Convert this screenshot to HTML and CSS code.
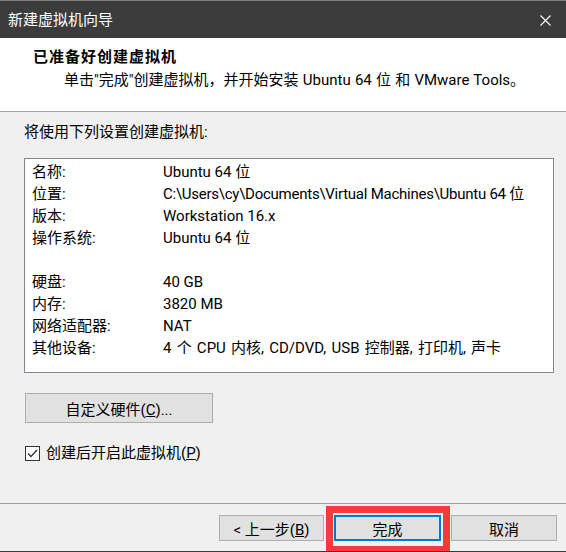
FILE: index.html
```html
<!DOCTYPE html>
<html lang="zh-CN">
<head>
  <meta charset="UTF-8" />
  <meta name="viewport" content="width=device-width, initial-scale=1.0"/>
  <title>新建虚拟机向导</title>
  <link rel="stylesheet" href="styles.css">
</head>
<body>

  <div class="window">
    <div class="titlebar">
      <span class="title">新建虚拟机向导</span>
      <span class="close-btn">
        <svg width="11" height="11" viewBox="0 0 11 11">
          <path d="M0.5 0.5 L10.5 10.5 M10.5 0.5 L0.5 10.5" stroke="#fff" stroke-width="1.1" fill="none"/>
        </svg>
      </span>
    </div>

    <div class="header">
      <div class="header-title">已准备好创建虚拟机</div>
      <div class="header-sub">单击"完成"创建虚拟机，并开始安装 Ubuntu 64 位 和 VMware Tools。</div>
    </div>

    <div class="content">
      <p class="intro">将使用下列设置创建虚拟机:</p>

      <div class="summary">
        <div class="row"><span class="key">名称:</span><span>Ubuntu 64 位</span></div>
        <div class="row"><span class="key">位置:</span><span class="path">C:\Users\cy\Documents\Virtual Machines\Ubuntu 64 位</span></div>
        <div class="row"><span class="key">版本:</span><span>Workstation 16.x</span></div>
        <div class="row"><span class="key">操作系统:</span><span>Ubuntu 64 位</span></div>
        <div class="row"></div>
        <div class="row"><span class="key">硬盘:</span><span>40 GB</span></div>
        <div class="row"><span class="key">内存:</span><span>3820 MB</span></div>
        <div class="row"><span class="key">网络适配器:</span><span>NAT</span></div>
        <div class="row"><span class="key">其他设备:</span><span class="wide">4 个 CPU 内核, CD/DVD, USB 控制器, 打印机, 声卡</span></div>
      </div>

      <button class="btn btn-custom">自定义硬件(<u>C</u>)...</button>

      <label class="check">
        <span class="check-box">
          <svg width="11" height="11" viewBox="0 0 11 11">
            <path d="M1 5.5 L4 8.5 L10 2" stroke="#333" stroke-width="1.3" fill="none"/>
          </svg>
        </span>
        <span>创建后开启此虚拟机(<u>P</u>)</span>
      </label>
    </div>

    <div class="footer">
      <button class="btn btn-back">&lt; 上一步(<u>B</u>)</button>
      <button class="btn btn-finish">完成</button>
      <button class="btn btn-cancel">取消</button>
    </div>

    <!-- red marker round the finish button -->
    <span class="marker"></span>
  </div>

</body>
</html>
```

FILE: styles.css
```css
body {
  margin: 0;
  font-family: Roboto, 'Noto Sans CJK SC', sans-serif;
  font-size: 15px;
  color: #000;
  background: #f0f0f0;
}

.window {
  position: relative;
  width: 566px;
  height: 552px;
  box-sizing: border-box;
  display: flex;
  flex-direction: column;
  background: #f0f0f0;
  border-bottom: 1px solid #3c3c3c;
  overflow: hidden;
}

.titlebar {
  height: 38px;
  box-sizing: border-box;
  border-top: 1px solid #7c7c7c;
  background: #3c3c3c;
  color: #fff;
  display: flex;
  align-items: center;
  justify-content: space-between;
  padding: 1px 15px 0 8px;
}

.title {
  font-size: 15px;
  line-height: 20px;
}

.close-btn {
  display: flex;
}

.header {
  height: 74px;
  box-sizing: border-box;
  background: #fff;
  border-bottom: 1px solid #a0a0a0;
  padding-top: 9px;
}

.header-title {
  padding-left: 33px;
  font-weight: bold;
  letter-spacing: 1px;
  line-height: 20px;
}

.header-sub {
  padding-left: 64px;
  margin-top: 3px;
  line-height: 20px;
  word-spacing: 0.5px;
}

.content {
  padding: 0 12px 0 24px;
}

.intro {
  margin: 10px 0 0;
  line-height: 20px;
}

.summary {
  margin-top: 16px;
  width: 530px;
  box-sizing: border-box;
  background: #fff;
  border: 1px solid #828790;
  padding: 2px 0 13px 7px;
}

.row {
  display: flex;
  height: 22px;
  line-height: 22px;
  white-space: nowrap;
}

.key {
  width: 131px;
  flex-shrink: 0;
}

.path {
  letter-spacing: -0.25px;
}

.wide {
  word-spacing: 1.5px;
}

.btn {
  font-family: inherit;
  font-size: 15px;
  color: #000;
  background: #e1e1e1;
  border: 1px solid #adadad;
  padding: 0;
  height: 26px;
  box-sizing: border-box;
}

.btn-custom {
  display: block;
  margin: 20px 0 0 1px;
  width: 188px;
  height: 30px;
}

.check {
  display: flex;
  align-items: center;
  gap: 6px;
  margin-top: 20px;
  line-height: 20px;
}

.check-box {
  width: 13px;
  height: 13px;
  border: 1px solid #333;
  background: #fff;
  display: flex;
  align-items: center;
  justify-content: center;
  margin-left: 1px;
}

.footer {
  margin-top: auto;
  border-top: 1px solid #a0a0a0;
  display: flex;
  justify-content: flex-end;
  gap: 10px;
  padding: 11px 9px 10px 0;
}

.btn-back {
  width: 105px;
}

.btn-finish {
  width: 107px;
  border: 2px solid #0078d7;
}

.btn-cancel {
  width: 106px;
}

.marker {
  position: absolute;
  left: 326px;
  top: 506px;
  width: 124px;
  height: 47px;
  box-sizing: border-box;
  border: 7px solid #f23b3b;
}
```
